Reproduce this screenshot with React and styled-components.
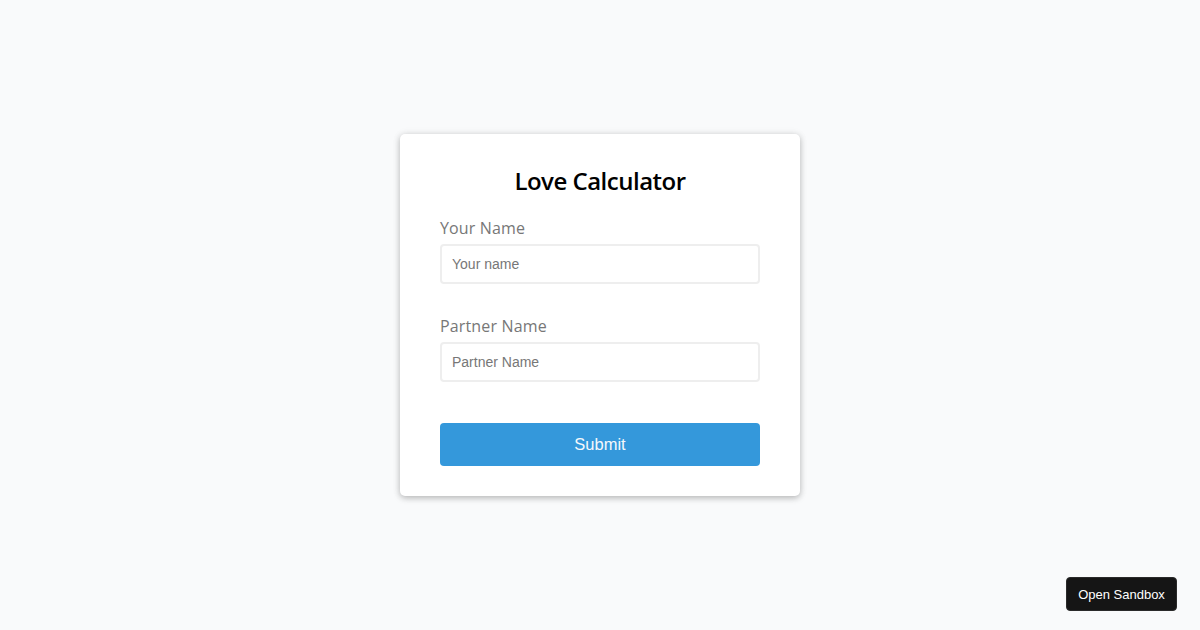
import React from "react";
import styled, { createGlobalStyle } from "styled-components";

const Global = createGlobalStyle`
  html, body { margin: 0; padding: 0; }
  body { background: #f9fafb; font-family: "Open Sans", sans-serif; }
  * { box-sizing: border-box; }
`;

const Page = styled.div`
  width: 1200px;
  height: 630px;
  display: flex;
  justify-content: center;
  padding-top: 134px;
  position: relative;
`;

const Card = styled.form`
  width: 400px;
  height: 362px;
  background: #fff;
  border-radius: 5px;
  box-shadow: 0 2px 6px rgba(0, 0, 0, 0.25), 0 0 10px rgba(0, 0, 0, 0.06);
  padding: 30px 40px 30px;
  display: flex;
  flex-direction: column;
`;

const Title = styled.h1`
  margin: 0 0 20px;
  font-family: "Open Sans", sans-serif;
  font-weight: 600;
  font-size: 24px;
  line-height: 33px;
  text-align: center;
  color: #000;
  letter-spacing: -0.5px;
`;

const Field = styled.div`
  display: flex;
  flex-direction: column;
  gap: 5px;
  margin-bottom: ${(p) => p.$mb}px;
`;

const Label = styled.label`
  font-family: "Open Sans", sans-serif;
  font-size: 16px;
  line-height: 22px;
  color: #777;
  letter-spacing: 0.15px;
`;

const Input = styled.input`
  width: 320px;
  height: 40px;
  border: 2px solid #eee;
  border-radius: 4px;
  padding: 0 10px;
  font-family: "Liberation Sans", Arial, sans-serif;
  font-size: 14px;
  color: #333;
  outline: none;
  &::placeholder { color: #777; }
`;

const Submit = styled.button`
  width: 320px;
  height: 43px;
  border: none;
  border-radius: 4px;
  background: #3498db;
  color: #f4f8fc;
  font-family: "Liberation Sans", Arial, sans-serif;
  font-size: 16.5px;
  cursor: pointer;
`;

const Sandbox = styled.a`
  position: absolute;
  right: 23px;
  bottom: 19px;
  width: 111px;
  height: 34px;
  background: #151515;
  border: 1px solid #2a2a2a;
  border-radius: 4px;
  color: #fff;
  font-family: "Liberation Sans", Arial, sans-serif;
  font-size: 13px;
  display: flex;
  align-items: center;
  justify-content: center;
  text-decoration: none;
`;

export default function App() {
  return (
    <>
      <Global />
      <Page>
        <Card onSubmit={(e) => e.preventDefault()}>
          <Title>Love Calculator</Title>
          <Field $mb={31}>
            <Label>Your Name</Label>
            <Input placeholder="Your name" />
          </Field>
          <Field $mb={41}>
            <Label>Partner Name</Label>
            <Input placeholder="Partner Name" />
          </Field>
          <Submit type="submit">Submit</Submit>
        </Card>
        <Sandbox href="#">Open Sandbox</Sandbox>
      </Page>
    </>
  );
}
